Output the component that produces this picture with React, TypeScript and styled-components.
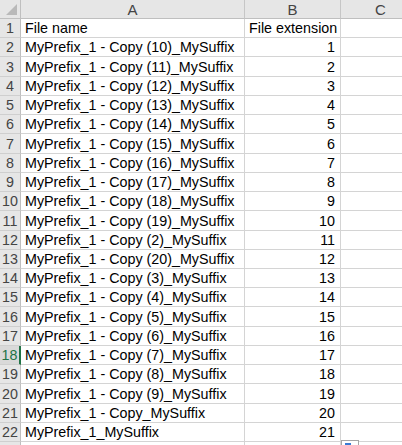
import React from 'react';
import styled, { createGlobalStyle } from 'styled-components';

const GlobalStyle = createGlobalStyle`
  html, body {
    margin: 0;
    padding: 0;
    background: #ffffff;
    overflow: hidden;
  }
  body {
    font-family: "Liberation Sans", Arial, sans-serif;
  }
`;

const ROW_H = 19.23;
const HEADER_H = 19;
const SELECTED_ROW = 18;

const names = [
    'MyPrefix_1 - Copy (10)_MySuffix',
    'MyPrefix_1 - Copy (11)_MySuffix',
    'MyPrefix_1 - Copy (12)_MySuffix',
    'MyPrefix_1 - Copy (13)_MySuffix',
    'MyPrefix_1 - Copy (14)_MySuffix',
    'MyPrefix_1 - Copy (15)_MySuffix',
    'MyPrefix_1 - Copy (16)_MySuffix',
    'MyPrefix_1 - Copy (17)_MySuffix',
    'MyPrefix_1 - Copy (18)_MySuffix',
    'MyPrefix_1 - Copy (19)_MySuffix',
    'MyPrefix_1 - Copy (2)_MySuffix',
    'MyPrefix_1 - Copy (20)_MySuffix',
    'MyPrefix_1 - Copy (3)_MySuffix',
    'MyPrefix_1 - Copy (4)_MySuffix',
    'MyPrefix_1 - Copy (5)_MySuffix',
    'MyPrefix_1 - Copy (6)_MySuffix',
    'MyPrefix_1 - Copy (7)_MySuffix',
    'MyPrefix_1 - Copy (8)_MySuffix',
    'MyPrefix_1 - Copy (9)_MySuffix',
    'MyPrefix_1 - Copy_MySuffix',
    'MyPrefix_1_MySuffix',
];

const Sheet = styled.div`
  width: 402px;
  height: 445px;
  overflow: hidden;
  display: flex;
  flex-direction: column;
  background: #ffffff;
  position: relative;
`;

const Row = styled.div<{ $h: number }>`
  display: grid;
  grid-template-columns: 21px 224px 96px 80px;
  height: ${(p) => p.$h}px;
  flex-shrink: 0;
`;

const Corner = styled.div`
  position: relative;
  background: #e6e6e6;
  border-right: 1px solid #bfbfbf;
  border-bottom: 1px solid #bfbfbf;
  box-sizing: border-box;
  &::after {
    content: '';
    position: absolute;
    right: 3px;
    bottom: 3px;
    width: 0;
    height: 0;
    border-left: 11px solid transparent;
    border-bottom: 11px solid #b9b9b9;
  }
`;

const ColHead = styled.div`
  background: #e6e6e6;
  border-right: 1px solid #c6c6c6;
  border-bottom: 1px solid #bfbfbf;
  box-sizing: border-box;
  display: flex;
  align-items: center;
  justify-content: center;
  font-size: 15px;
  color: #444444;
  padding-top: 1px;
`;

const RowHead = styled.div<{ $sel?: boolean }>`
  background: ${(p) => (p.$sel ? '#d9d9d9' : '#e6e6e6')};
  border-right: ${(p) => (p.$sel ? '2px solid #217346' : '1px solid #bfbfbf')};
  border-bottom: 1px solid #cfcfcf;
  box-sizing: border-box;
  display: flex;
  align-items: flex-end;
  justify-content: center;
  padding-bottom: 1px;
  font-size: 14.3px;
  color: ${(p) => (p.$sel ? '#217346' : '#444444')};
  overflow: hidden;
  white-space: nowrap;
`;

const Cell = styled.div<{ $num?: boolean }>`
  border-right: 1px solid #d4d4d4;
  border-bottom: 1px solid #d4d4d4;
  box-sizing: border-box;
  display: flex;
  align-items: flex-end;
  justify-content: ${(p) => (p.$num ? 'flex-end' : 'flex-start')};
  padding: 0 ${(p) => (p.$num ? '5px' : '0')} 1px ${(p) => (p.$num ? '0' : '4px')};
  font-size: 14.3px;
  color: #000000;
  white-space: nowrap;
  overflow: visible;
`;

const QuickIcon = styled.div`
  position: absolute;
  left: 341px;
  top: 440px;
  width: 18px;
  height: 16px;
  border: 1px solid #a6a6a6;
  background: #ffffff;
  box-sizing: border-box;
  &::after {
    content: '';
    position: absolute;
    left: 3px;
    top: 2px;
    width: 6px;
    height: 5px;
    background: #3b7bd4;
  }
`;

function rowHeight(i: number) {
    // rows are ~19.23px each, rounded onto the pixel grid
    const top = Math.round(HEADER_H + i * ROW_H);
    const bottom = Math.round(HEADER_H + (i + 1) * ROW_H);
    return bottom - top;
}

const App: React.FC = () => {
    const rows: { a: string; b: string }[] = [
        { a: 'File name', b: '' },
        ...names.map((n, i) => ({ a: n, b: String(i + 1) })),
        { a: '', b: '' },
    ];
    return (
        <>
            <GlobalStyle />
            <Sheet>
                <Row $h={HEADER_H}>
                    <Corner />
                    <ColHead>A</ColHead>
                    <ColHead>B</ColHead>
                    <ColHead>C</ColHead>
                </Row>
                {rows.map((r, i) => (
                    <Row key={i} $h={rowHeight(i)}>
                        <RowHead $sel={i + 1 === SELECTED_ROW}>{i + 1}</RowHead>
                        <Cell>{r.a}</Cell>
                        {i === 0 ? (
                            <Cell>File extension</Cell>
                        ) : (
                            <Cell $num>{r.b}</Cell>
                        )}
                        <Cell />
                    </Row>
                ))}
                <QuickIcon />
            </Sheet>
        </>
    );
};

export default App;
